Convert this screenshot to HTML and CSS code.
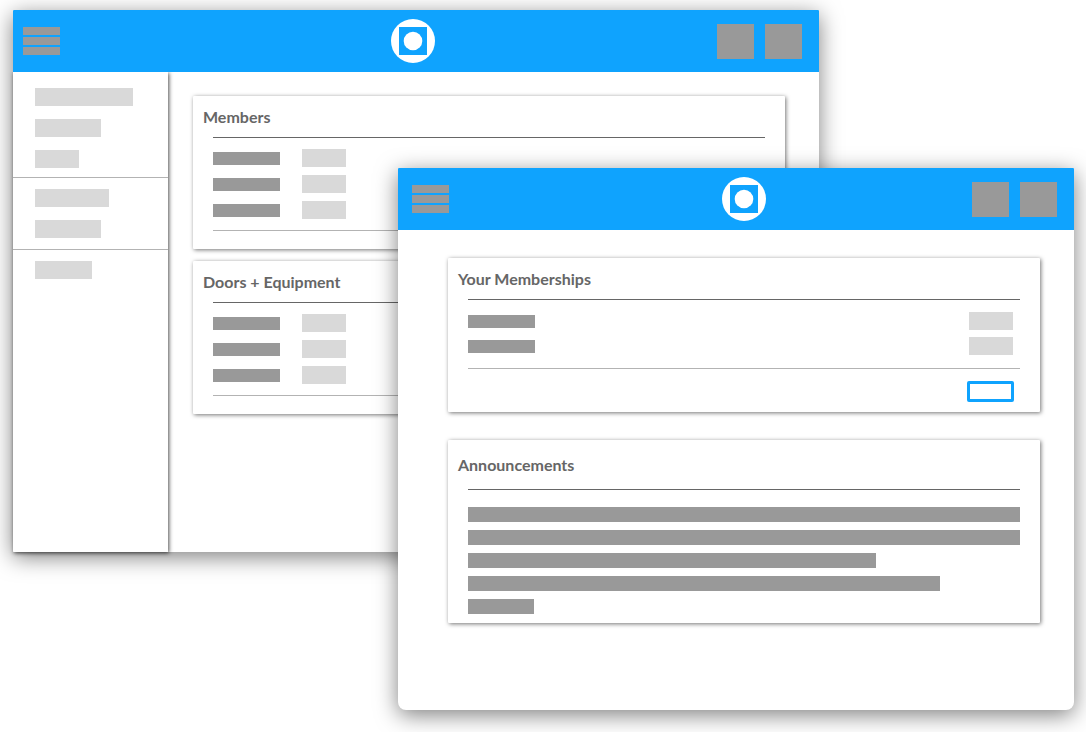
FILE: index.html
```html
<!DOCTYPE html>
<html lang="en">
<head>
    <meta charset="UTF-8">
    <meta name="viewport" content="width=device-width, initial-scale=1">
    <title>Member Portal</title>

    <link rel="stylesheet" href="styles.css">
</head>
<body>

<main class="desktop">
    <section class="window window--admin">
        <header class="topbar">
            <button class="topbar__menu" type="button" aria-label="Menu">
                <span></span>
                <span></span>
                <span></span>
            </button>
            <svg class="topbar__logo" viewBox="0 0 44 44" aria-hidden="true">
                <circle cx="22" cy="22" r="22" fill="#fff"/>
                <rect x="8" y="8" width="28" height="28" fill="#0fa3fe"/>
                <circle cx="22" cy="22" r="9.3" fill="#fff"/>
            </svg>
            <div class="topbar__actions">
                <button class="topbar__action" type="button" aria-label="Notifications"></button>
                <button class="topbar__action" type="button" aria-label="Profile"></button>
            </div>
        </header>
        <div class="window__body">
            <nav class="sidebar" aria-label="Sections">
                <ul class="sidebar__group">
                    <li class="sidebar__item sidebar__item--xl"></li>
                    <li class="sidebar__item sidebar__item--m"></li>
                    <li class="sidebar__item sidebar__item--xs"></li>
                </ul>
                <ul class="sidebar__group">
                    <li class="sidebar__item sidebar__item--l"></li>
                    <li class="sidebar__item sidebar__item--m"></li>
                </ul>
                <ul class="sidebar__group">
                    <li class="sidebar__item sidebar__item--s"></li>
                </ul>
            </nav>
            <div class="content">
                <article class="card">
                    <h2 class="card__heading">Members</h2>
                    <ul class="rows">
                        <li class="rows__row"><span class="bar"></span><span class="tag"></span></li>
                        <li class="rows__row"><span class="bar"></span><span class="tag"></span></li>
                        <li class="rows__row"><span class="bar"></span><span class="tag"></span></li>
                    </ul>
                </article>
                <article class="card">
                    <h2 class="card__heading">Doors + Equipment</h2>
                    <ul class="rows">
                        <li class="rows__row"><span class="bar"></span><span class="tag"></span></li>
                        <li class="rows__row"><span class="bar"></span><span class="tag"></span></li>
                        <li class="rows__row"><span class="bar"></span><span class="tag"></span></li>
                    </ul>
                </article>
            </div>
        </div>
    </section>

    <section class="window window--member">
        <header class="topbar">
            <button class="topbar__menu" type="button" aria-label="Menu">
                <span></span>
                <span></span>
                <span></span>
            </button>
            <svg class="topbar__logo" viewBox="0 0 44 44" aria-hidden="true">
                <circle cx="22" cy="22" r="22" fill="#fff"/>
                <rect x="8" y="8" width="28" height="28" fill="#0fa3fe"/>
                <circle cx="22" cy="22" r="9.3" fill="#fff"/>
            </svg>
            <div class="topbar__actions">
                <button class="topbar__action" type="button" aria-label="Notifications"></button>
                <button class="topbar__action" type="button" aria-label="Profile"></button>
            </div>
        </header>
        <div class="content">
            <article class="card">
                <h2 class="card__heading">Your Memberships</h2>
                <ul class="rows rows--spread">
                    <li class="rows__row"><span class="bar"></span><span class="tag"></span></li>
                    <li class="rows__row"><span class="bar"></span><span class="tag"></span></li>
                </ul>
                <div class="card__footer">
                    <button class="card__button" type="button" aria-label="Add membership"></button>
                </div>
            </article>
            <article class="card card--news">
                <h2 class="card__heading">Announcements</h2>
                <div class="lines">
                    <span class="lines__line"></span>
                    <span class="lines__line"></span>
                    <span class="lines__line lines__line--medium"></span>
                    <span class="lines__line lines__line--long"></span>
                    <span class="lines__line lines__line--short"></span>
                </div>
            </article>
        </div>
    </section>
</main>

</body>
</html>
```
FILE: styles.css
```css
* {
    box-sizing: border-box;
    margin: 0;
    padding: 0;
}

body {
    background: #fff;
    color: #666;
    font-family: Lato, sans-serif;
}

ul {
    list-style: none;
}

button {
    border: none;
    cursor: pointer;
}

/* both windows share one grid cell so they overlap */
.desktop {
    display: grid;
    align-items: start;
    padding: 10px 12px 22px 13px;
}
.window {
    grid-area: 1 / 1;
    background: #fff;
    box-shadow: 0 5px 22px rgba(0, 0, 0, .5);
}
.window--admin {
    margin-right: 255px;
    border-radius: 1px;
}
.window--member {
    margin: 158px 0 0 385px;
    border-radius: 1px 1px 8px 8px;
}
.window__body {
    display: flex;
}

.topbar {
    display: grid;
    grid-template-columns: 1fr auto 1fr;
    align-items: center;
    height: 62px;
    padding: 0 17px 0 10px;
    background: #0fa3fe;
    border-radius: 1px 1px 0 0;
}
.window--member .topbar {
    padding-left: 14px;
}
.topbar__menu {
    display: flex;
    flex-direction: column;
    gap: 2px;
    width: 37px;
    background: none;
}
.topbar__menu span {
    height: 8px;
    background: #999;
}
.topbar__logo {
    display: block;
    width: 44px;
    height: 44px;
}
.window--member .topbar__logo {
    margin-left: 18px;
}
.topbar__actions {
    display: flex;
    justify-content: flex-end;
    gap: 11px;
}
.topbar__action {
    width: 37px;
    height: 35px;
    background: #999;
}

.sidebar {
    flex: 0 0 155px;
    box-shadow: 1px 1px 4px rgba(0, 0, 0, .7);
    clip-path: inset(0 -6px -6px -6px);
}
.sidebar__group {
    display: flex;
    flex-direction: column;
    gap: 13px;
    padding: 11px 22px;
}
.sidebar__group:first-child {
    padding: 16px 22px 9px;
}
.sidebar__group:not(:last-child) {
    border-bottom: 1px solid #b3b3b3;
}
.sidebar__item {
    height: 18px;
    background: #d9d9d9;
}
.sidebar__item--xs {
    width: 44px;
}
.sidebar__item--s {
    width: 57px;
}
.sidebar__item--m {
    width: 66px;
}
.sidebar__item--l {
    width: 74px;
}
.sidebar__item--xl {
    width: 98px;
}

.content {
    display: flex;
    flex: 1;
    flex-direction: column;
    gap: 11px;
    padding: 24px 34px 138px 25px;
}
.window--member .content {
    gap: 28px;
    padding: 28px 34px 87px 50px;
}

.card {
    padding: 11px 20px 18px;
    background: #fff;
    border-radius: 1px;
    box-shadow: 1px 1px 4px rgba(0, 0, 0, .55);
}
.card__heading {
    margin: 0 0 10px -10px;
    font-size: 16px;
    font-weight: 700;
    line-height: 20px;
}
.card__footer {
    display: flex;
    justify-content: flex-end;
    padding: 12px 6px 0 0;
}
.card__button {
    width: 47px;
    height: 21px;
    background: #fff;
    border: 3px solid #0fa3fe;
    border-radius: 2px;
}
.window--member .card {
    padding-bottom: 10px;
}
.window--member .card--news {
    padding: 15px 20px 9px;
}
.card--news .card__heading {
    margin-bottom: 14px;
}

.rows {
    display: flex;
    flex-direction: column;
    gap: 8px;
    padding: 11px 0;
    border-top: 1px solid #666;
    border-bottom: 1px solid #b3b3b3;
}
.rows__row {
    display: flex;
    align-items: center;
    gap: 22px;
}
.window--admin .card + .card {
    margin-top: 1px;
}
.rows--spread {
    gap: 7px;
    padding: 12px 7px 13px 0;
}
.rows--spread .rows__row {
    justify-content: space-between;
}
.bar {
    width: 67px;
    height: 13px;
    background: #999;
}
.tag {
    width: 44px;
    height: 18px;
    background: #d9d9d9;
}

.lines {
    display: flex;
    flex-direction: column;
    gap: 8px;
    padding-top: 17px;
    border-top: 1px solid #666;
}
.lines__line {
    height: 15px;
    background: #999;
}
.lines__line--medium {
    width: 74%;
}
.lines__line--long {
    width: 85.5%;
}
.lines__line--short {
    width: 12%;
}
```
